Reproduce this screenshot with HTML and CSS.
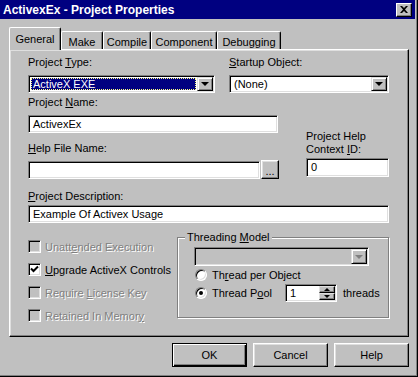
FILE: index.html
```html
<!DOCTYPE html>
<html lang="en">
<head>
    <meta charset="UTF-8">
    <title>ActivexEx - Project Properties</title>
    <link rel="stylesheet" href="styles.css">
</head>
<body>
    <div class="window">
        <div class="titlebar">
            <span class="title">ActivexEx - Project Properties</span>
            <span class="close">
                <svg width="8" height="7" viewBox="0 0 8 7"><path d="M0 0h2l2 2 2-2h2L5 3.5 8 7H6L4 5 2 7H0l3-3.5z" fill="#000"/></svg>
            </span>
        </div>

        <div class="tabs">
            <div class="tab active">General</div>
            <div class="tab tab-make">Make</div>
            <div class="tab tab-compile">Compile</div>
            <div class="tab tab-component">Component</div>
            <div class="tab tab-debug">Debugging</div>
        </div>

        <div class="panel">
            <div class="row">
                <div class="col col-type">
                    <label>Project <u>T</u>ype:</label>
                    <div class="field combo">
                        <span class="combo-text selected">ActiveX EXE</span>
                        <span class="drop"><i class="arrow"></i></span>
                    </div>
                </div>
                <div class="col col-startup">
                    <label><u>S</u>tartup Object:</label>
                    <div class="field combo">
                        <span class="combo-text">(None)</span>
                        <span class="drop"><i class="arrow"></i></span>
                    </div>
                </div>
            </div>

            <div class="col col-name">
                <label>Project <u>N</u>ame:</label>
                <div class="field input name-input">ActivexEx</div>
            </div>

            <div class="row row-help">
                <div class="col col-helpfile">
                    <label><u>H</u>elp File Name:</label>
                    <div class="help-line">
                        <div class="field input helpfile-input"></div>
                        <div class="button browse">...</div>
                    </div>
                </div>
                <div class="col col-context">
                    <label>Project Help<br>Context <u>I</u>D:</label>
                    <div class="field input context-input">0</div>
                </div>
            </div>

            <div class="col col-desc">
                <label><u>P</u>roject Description:</label>
                <div class="field input desc-input">Example Of Activex Usage</div>
            </div>

            <div class="row row-bottom">
                <div class="checks">
                    <div class="check disabled"><span class="box"></span><span>Unatt<u>e</u>nded Execution</span></div>
                    <div class="check"><span class="box"><svg width="9" height="9" viewBox="0 0 9 9"><path d="M1 3.5l2.5 2.5L8 1.5" fill="none" stroke="#000" stroke-width="2"/></svg></span><span><u>U</u>pgrade ActiveX Controls</span></div>
                    <div class="check disabled"><span class="box"></span><span>Require <u>L</u>icense Key</span></div>
                    <div class="check disabled"><span class="box"></span><span>Retained In Memor<u>y</u></span></div>
                </div>

                <div class="group">
                    <span class="group-label">Threading <u>M</u>odel</span>
                    <div class="field combo combo-disabled">
                        <span class="combo-text"></span>
                        <span class="drop"><i class="arrow"></i></span>
                    </div>
                    <div class="radio-row">
                        <span class="radio"></span><span>Th<u>r</u>ead per Object</span>
                    </div>
                    <div class="radio-row">
                        <span class="radio on"></span><span class="pool-label">Thread P<u>o</u>ol</span>
                        <div class="field spin">
                            <span class="spin-text">1</span>
                            <span class="spin-btns">
                                <span class="spin-btn"><i class="up"></i></span>
                                <span class="spin-btn"><i class="down"></i></span>
                            </span>
                        </div>
                        <span class="threads">threads</span>
                    </div>
                </div>
            </div>
        </div>

        <div class="buttons">
            <div class="button push default">OK</div>
            <div class="button push">Cancel</div>
            <div class="button push">Help</div>
        </div>
    </div>
</body>
</html>
```

FILE: styles.css
```css
* {
    box-sizing: border-box;
}
body {
    margin: 0;
    background-color: #c0c0c0;
    font-family: "Liberation Sans", Arial, sans-serif;
    font-size: 11px;
    color: #000000;
}
.window {
    width: 418px;
    height: 377px;
    background-color: #c0c0c0;
    box-shadow: inset -1px -1px #000000, inset -2px -2px #808080;
    display: flex;
    flex-direction: column;
}

/* title bar */
.titlebar {
    height: 19px;
    margin-right: 3px;
    padding: 0 3px 0 3px;
    background-color: #000080;
    color: #ffffff;
    display: flex;
    align-items: center;
    justify-content: space-between;
}
.title {
    font-weight: bold;
    font-size: 12px;
}
.close {
    width: 16px;
    height: 14px;
    background-color: #c0c0c0;
    border: 1px solid;
    border-color: #ffffff #000000 #000000 #ffffff;
    box-shadow: inset -1px -1px #808080;
    display: flex;
    align-items: center;
    justify-content: center;
}

/* tabs */
.tabs {
    height: 30px;
    padding-left: 9px;
    display: flex;
    align-items: flex-end;
}
.tab {
    height: 18px;
    padding-top: 2px;
    border: 1px solid;
    border-bottom: none;
    border-color: #ffffff #000000 #ffffff #ffffff;
    border-radius: 2px 2px 0 0;
    box-shadow: inset -1px 0 #808080;
    display: flex;
    align-items: center;
    justify-content: center;
}
.tab.active {
    width: 52px;
    height: 23px;
    padding-top: 0;
    margin-bottom: -1px;
    position: relative;
    z-index: 1;
    background-color: #c0c0c0;
}
.tab-make { width: 42px; }
.tab-compile { width: 48px; }
.tab-component { width: 66px; }
.tab-debug { width: 64px; }

/* panel */
.panel {
    margin-left: 9px;
    width: 400px;
    height: 288px;
    padding: 6px 0 0 18px;
    border: 1px solid;
    border-color: #ffffff #000000 #000000 #ffffff;
    box-shadow: inset -1px -1px #808080, inset 1px 1px #dfdfdf;
}
label {
    display: block;
    line-height: 13px;
}
.row {
    display: flex;
}
.col-type {
    width: 187px;
}
.col-type label,
.col-startup label,
.col-name label {
    margin-bottom: 6px;
}
.col-startup {
    width: 160px;
    margin-left: 14px;
}
.col-name {
    margin-top: 3px;
}

/* sunken fields */
.field {
    height: 18px;
    background-color: #ffffff;
    border: 1px solid;
    border-color: #808080 #ffffff #ffffff #808080;
    box-shadow: inset 1px 1px #000000, inset -1px -1px #dfdfdf;
}
.input {
    padding: 1px 0 0 4px;
    line-height: 14px;
}
.combo {
    padding: 1px 1px 1px 1px;
    display: flex;
}
.combo-text {
    flex: 1;
    margin: 1px 1px 1px 1px;
    padding-left: 2px;
    line-height: 12px;
}
.combo-text.selected {
    background-color: #000080;
    color: #ffffff;
    outline: 1px dotted #ffff80;
    outline-offset: -1px;
}
.drop {
    width: 16px;
    background-color: #c0c0c0;
    border: 1px solid;
    border-color: #dfdfdf #000000 #000000 #dfdfdf;
    box-shadow: inset 1px 1px #ffffff, inset -1px -1px #808080;
    display: flex;
    align-items: center;
    justify-content: center;
}
.arrow {
    width: 0;
    height: 0;
    border-left: 4px solid transparent;
    border-right: 4px solid transparent;
    border-top: 4px solid #000000;
}
.combo-disabled {
    width: 175px;
    height: 19px;
    background-color: #c0c0c0;
}
.combo-disabled .arrow {
    border-top-color: #808080;
}
.name-input {
    width: 250px;
}

/* help row */
.row-help {
    margin-top: -3px;
    align-items: flex-end;
}
.col-helpfile {
    width: 251px;
}
.col-helpfile label {
    margin-bottom: 5px;
}
.help-line {
    display: flex;
    align-items: flex-end;
}
.helpfile-input {
    width: 232px;
}
.button {
    background-color: #c0c0c0;
    border: 1px solid;
    border-color: #ffffff #000000 #000000 #ffffff;
    box-shadow: inset -1px -1px #808080, inset 1px 1px #dfdfdf;
    display: flex;
    align-items: center;
    justify-content: center;
}
.browse {
    width: 18px;
    height: 19px;
    margin-left: 1px;
    padding-top: 3px;
}
.col-context {
    width: 83px;
    margin-left: 27px;
    margin-bottom: 2px;
}
.col-context label {
    margin-bottom: 2px;
}
.context-input {
    height: 19px;
}
.col-desc {
    margin-top: 11px;
}
.col-desc label {
    margin-bottom: 2px;
}
.desc-input {
    width: 361px;
}

/* checkboxes and group */
.row-bottom {
    margin-top: 12px;
}
.checks {
    width: 149px;
}
.check {
    height: 23px;
    display: flex;
    align-items: center;
    white-space: nowrap;
}
.box {
    width: 13px;
    height: 13px;
    margin-right: 4px;
    background-color: #ffffff;
    border: 1px solid;
    border-color: #808080 #ffffff #ffffff #808080;
    box-shadow: inset 1px 1px #000000, inset -1px -1px #dfdfdf;
    display: flex;
    align-items: center;
    justify-content: center;
}
.check.disabled {
    color: #808080;
    text-shadow: 1px 1px #ffffff;
}
.check.disabled .box {
    background-color: #c0c0c0;
}
.group {
    position: relative;
    width: 212px;
    height: 81px;
    margin-top: 2px;
    padding: 9px 0 0 16px;
    border: 1px solid #808080;
    box-shadow: inset 1px 1px #ffffff, 1px 1px #ffffff;
}
.group-label {
    position: absolute;
    top: -7px;
    left: 7px;
    padding: 0 2px;
    line-height: 13px;
    background-color: #c0c0c0;
}
.radio-row {
    height: 18px;
    padding-left: 1px;
    display: flex;
    align-items: center;
}
.radio-row:first-of-type {
    margin-top: 3px;
}
.radio {
    width: 12px;
    height: 12px;
    margin-right: 5px;
    border-radius: 50%;
    background-color: #ffffff;
    border: 1px solid;
    border-color: #808080 #ffffff #ffffff #808080;
    box-shadow: inset 1px 1px #000000, inset -1px -1px #dfdfdf;
    display: flex;
    align-items: center;
    justify-content: center;
}
.radio.on::after {
    content: "";
    width: 4px;
    height: 4px;
    border-radius: 50%;
    background-color: #000000;
}
.pool-label {
    width: 73px;
}
.spin {
    width: 52px;
    padding: 1px;
    display: flex;
}
.spin-text {
    flex: 1;
    padding: 1px 0 0 3px;
    line-height: 13px;
}
.spin-btns {
    width: 16px;
    display: flex;
    flex-direction: column;
}
.spin-btn {
    flex: 1;
    background-color: #c0c0c0;
    border: 1px solid;
    border-color: #dfdfdf #000000 #000000 #dfdfdf;
    box-shadow: inset -1px -1px #808080;
    display: flex;
    align-items: center;
    justify-content: center;
}
.up, .down {
    width: 0;
    height: 0;
    border-left: 3px solid transparent;
    border-right: 3px solid transparent;
}
.up {
    border-bottom: 3px solid #000000;
}
.down {
    border-top: 3px solid #000000;
}
.threads {
    margin-left: 6px;
}

/* dialog buttons */
.buttons {
    margin-top: 6px;
    padding-right: 9px;
    display: flex;
    justify-content: flex-end;
    gap: 6px;
}
.push {
    width: 75px;
    height: 24px;
}
.push.default {
    border-color: #000000;
    box-shadow: inset 1px 1px #ffffff, inset -1px -1px #000000, inset -2px -2px #808080;
}
```
